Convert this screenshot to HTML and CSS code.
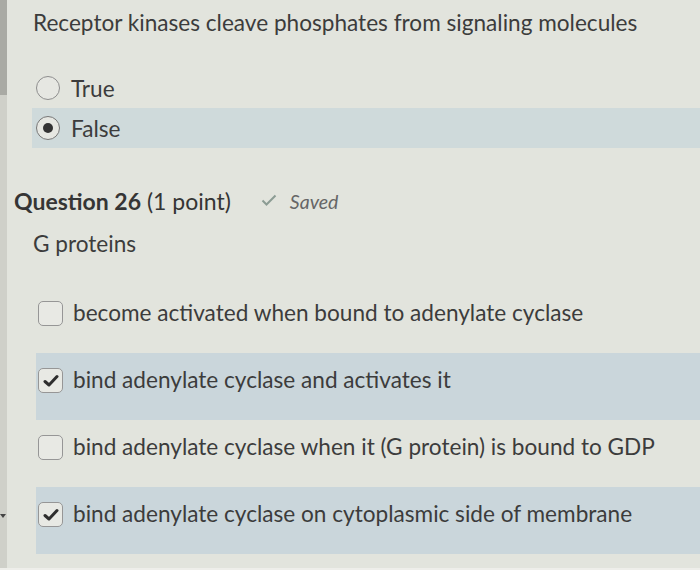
FILE: index.html
```html
<!DOCTYPE html>
<html lang="en">
<head>
<meta charset="utf-8">
<title>Quiz</title>
<link rel="stylesheet" href="styles.css">
</head>
<body>
<div class="page">
  <div class="rail">
    <div class="rail-top"></div>
    <div class="rail-caret"></div>
  </div>
  <main class="main">
    <p class="prompt">Receptor kinases cleave phosphates from signaling molecules</p>
    <div class="radio-list">
      <div class="opt">
        <span class="radio"></span>
        <span class="label">True</span>
      </div>
      <div class="opt selected">
        <span class="radio checked"></span>
        <span class="label">False</span>
      </div>
    </div>

    <div class="q-head">
      <span class="q-title"><b>Question 26</b> (1 point)</span>
      <span class="saved">
        <svg class="saved-check" width="16" height="12" viewBox="0 0 16 12"><path d="M1.5 6.5 L5.5 10.5 L14.5 1.5" fill="none" stroke="#8c9c94" stroke-width="2"/></svg>
        <i>Saved</i>
      </span>
    </div>
    <p class="prompt q2">G proteins</p>

    <div class="check-list">
      <div class="copt">
        <span class="box"></span>
        <span class="label">become activated when bound to adenylate cyclase</span>
      </div>
      <div class="copt selected">
        <span class="box"><svg width="16" height="14" viewBox="0 0 16 14"><path d="M2 7.5 L6 11 L14 2.5" fill="none" stroke="#2e2e2e" stroke-width="3" stroke-linecap="round" stroke-linejoin="round"/></svg></span>
        <span class="label">bind adenylate cyclase and activates it</span>
      </div>
      <div class="copt">
        <span class="box"></span>
        <span class="label">bind adenylate cyclase when it (G protein) is bound to GDP</span>
      </div>
      <div class="copt selected">
        <span class="box"><svg width="16" height="14" viewBox="0 0 16 14"><path d="M2 7.5 L6 11 L14 2.5" fill="none" stroke="#2e2e2e" stroke-width="3" stroke-linecap="round" stroke-linejoin="round"/></svg></span>
        <span class="label">bind adenylate cyclase on cytoplasmic side of membrane</span>
      </div>
    </div>
  </main>
</div>
</body>
</html>
```
FILE: styles.css
```css
html, body {
  margin: 0;
  padding: 0;
}
body {
  width: 700px;
  height: 570px;
  overflow: hidden;
  background: #e2e4dd;
  font-family: Lato, "Open Sans", sans-serif;
  color: #3c3c3c;
}
.page {
  display: flex;
  height: 568px;
  border-bottom: 2px solid #eeeeea;
}
.rail {
  width: 7px;
  background: #cfd0c9;
  display: flex;
  flex-direction: column;
}
.rail-top {
  height: 95px;
  background: #a9aaa4;
}
.rail-caret {
  margin-top: 419px;
  width: 0;
  height: 0;
  border-left: 3px solid transparent;
  border-right: 3px solid transparent;
  border-top: 4px solid #444;
  margin-left: 0;
}
.main {
  flex: 1;
  padding-left: 7px;
  padding-top: 10px;
}
.prompt {
  margin: 0 0 0 19px;
  font-size: 22.6px;
  line-height: 26px;
}
.radio-list {
  margin: 32px 0 0 18px;
}
.opt {
  height: 40px;
  display: flex;
  align-items: center;
  padding-left: 4px;
  gap: 11px;
  font-size: 22.6px;
}
.opt.selected {
  background: #cfdadb;
}
.radio {
  width: 22px;
  height: 22px;
  border: 1.5px solid #8e8e8e;
  border-radius: 50%;
  background: #e6e7e2;
  display: flex;
  align-items: center;
  justify-content: center;
}
.radio.checked {
  border-color: #777;
}
.radio.checked::after {
  content: "";
  width: 10px;
  height: 10px;
  border-radius: 50%;
  background: #333;
}
.q-head {
  margin-top: 40px;
  display: flex;
  align-items: center;
  height: 26px;
}
.q-title {
  font-size: 23px;
  color: #353535;
}
.q-title b {
  font-weight: 700;
}
.saved {
  margin-left: 30px;
  display: flex;
  align-items: center;
  gap: 13px;
  font-size: 19.5px;
  color: #666;
}
.saved-check {
  margin-top: -2px;
}
.q2 {
  margin-top: 17px;
}
.check-list {
  margin: 29px 0 0 22px;
}
.copt {
  height: 67px;
  box-sizing: border-box;
  padding: 14px 0 0 2px;
  display: flex;
  align-items: flex-start;
  gap: 10px;
  font-size: 22.6px;
  line-height: 26px;
}
.copt.selected {
  background: #cad6db;
}
.box {
  width: 23px;
  height: 23px;
  margin-top: 1px;
  border: 1.5px solid #969696;
  border-radius: 5px;
  background: #e8e9e4;
  display: flex;
  align-items: center;
  justify-content: center;
}
```
